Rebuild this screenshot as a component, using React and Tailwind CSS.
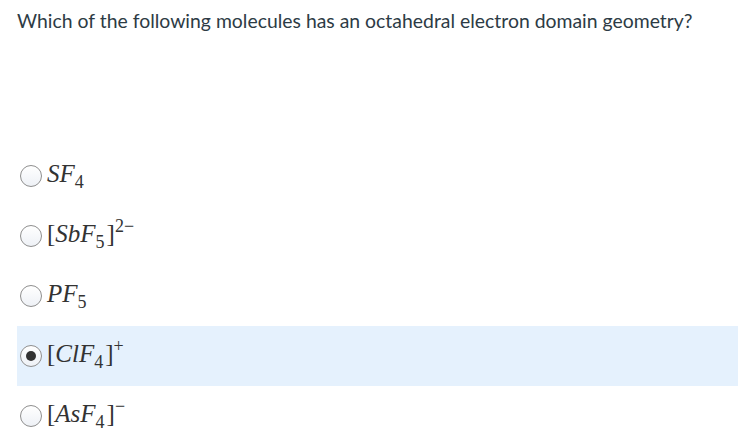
const options = [
  { id: "sf4", main: "SF", sub: "4", sup: "", bracket: false },
  { id: "sbf5", main: "SbF", sub: "5", sup: "2−", bracket: true },
  { id: "pf5", main: "PF", sub: "5", sup: "", bracket: false },
  { id: "clf4", main: "ClF", sub: "4", sup: "+", bracket: true },
  { id: "asf4", main: "AsF", sub: "4", sup: "−", bracket: true },
];

function Radio({ checked }) {
  return (
    <span className="flex h-[22px] w-[22px] shrink-0 items-center justify-center rounded-full border border-[#8f8f8f] bg-gradient-to-b from-white to-[#eef1f6]">
      {checked && <span className="h-[10px] w-[10px] rounded-full bg-[#333]" />}
    </span>
  );
}

function Formula({ o }) {
  return (
    <span className="font-['Liberation_Serif',serif] text-[25px] leading-none text-[#333]">
      {o.bracket && <span>[</span>}
      <span className="italic">{o.main}</span>
      <span className="relative top-[6px] text-[18px]">{o.sub}</span>
      {o.bracket && <span className="ml-[2px]">]</span>}
      {o.sup && <span className="relative -top-[10px] text-[18px]">{o.sup}</span>}
    </span>
  );
}

export default function App() {
  const selected = "clf4";
  return (
    <div className="h-[438px] w-[742px] overflow-hidden bg-white pl-[17px] pr-[4px]">
      <p className="pt-[7px] font-['Lato',sans-serif] text-[19.4px] leading-[27px] text-[#2d3b45]">
        Which of the following molecules has an octahedral electron domain geometry?
      </p>
      <div className="mt-[112px] flex flex-col">
        {options.map((o) => (
          <label
            key={o.id}
            className={`flex h-[60px] items-center gap-[5px] pl-[3px] ${
              o.id === selected ? "bg-[#e5f1fd]" : ""
            }`}
          >
            <Radio checked={o.id === selected} />
            <span className="-mt-[3px]">
              <Formula o={o} />
            </span>
          </label>
        ))}
      </div>
    </div>
  );
}
